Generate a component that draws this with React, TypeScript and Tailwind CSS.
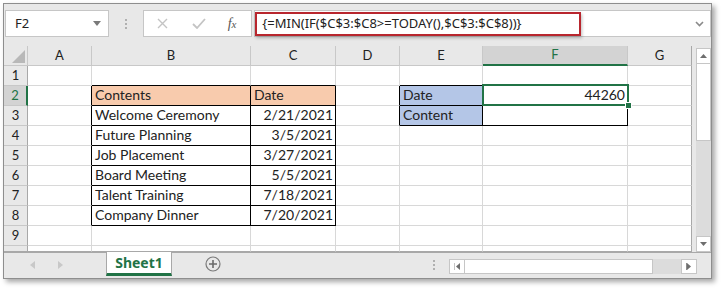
import React from 'react';

type Cell = { text?: string; align?: 'left' | 'right'; fill?: string };

const cols = ['A', 'B', 'C', 'D', 'E', 'F', 'G'];

// sheet content, keyed by "row-col" (col index 0 = A)
const cells: Record<string, Cell> = {
    '2-1': { text: 'Contents', fill: 'bg-[#f8cbad]' },
    '2-2': { text: 'Date', fill: 'bg-[#f8cbad]' },
    '3-1': { text: 'Welcome Ceremony' },
    '3-2': { text: '2/21/2021', align: 'right' },
    '4-1': { text: 'Future Planning' },
    '4-2': { text: '3/5/2021', align: 'right' },
    '5-1': { text: 'Job Placement' },
    '5-2': { text: '3/27/2021', align: 'right' },
    '6-1': { text: 'Board Meeting' },
    '6-2': { text: '5/5/2021', align: 'right' },
    '7-1': { text: 'Talent Training' },
    '7-2': { text: '7/18/2021', align: 'right' },
    '8-1': { text: 'Company Dinner' },
    '8-2': { text: '7/20/2021', align: 'right' },
    '2-4': { text: 'Date', fill: 'bg-[#b4c6e7]' },
    '3-4': { text: 'Content', fill: 'bg-[#b4c6e7]' },
    '2-5': { text: '44260', align: 'right' },
};

// ranges with thin black borders: [r1, c1, r2, c2]
const boxes = [
    [2, 1, 8, 2],
    [2, 4, 3, 5],
];

const inBox = (r: number, c: number) =>
    boxes.some(([r1, c1, r2, c2]) => r >= r1 && r <= r2 && c >= c1 && c <= c2);

const font = { fontFamily: 'Lato, "Noto Sans", sans-serif' };

const App: React.FC = () => {
    const rows = [1, 2, 3, 4, 5, 6, 7, 8, 9, 10];

    return (
        <div className="w-[721px] h-[289px] bg-white pt-[3px] pl-[3px]">
            <div className="w-[709px] h-[276px] border border-[#8e8e8e] bg-[#e8e8e8] shadow-[3px_3px_5px_rgba(0,0,0,0.35)] flex flex-col">
                {/* formula bar */}
                <div className="h-[42px] flex items-start pt-[6px] shrink-0">
                    <div className="ml-[1px] w-[104px] h-[27px] bg-white border border-[#c6c6c6] flex items-center justify-between pl-[9px] pr-[7px]">
                        <span className="text-[13px] text-[#222]" style={{ fontFamily: '"Noto Sans", sans-serif' }}>F2</span>
                        <svg width="8" height="5" viewBox="0 0 8 5"><path d="M0 0h8L4 5z" fill="#7a7a7a" /></svg>
                    </div>
                    <div className="w-[34px] h-[27px] flex flex-col items-center justify-center gap-[2px]">
                        <span className="w-[2px] h-[2px] bg-[#b0b0b0]" />
                        <span className="w-[2px] h-[2px] bg-[#b0b0b0]" />
                        <span className="w-[2px] h-[2px] bg-[#b0b0b0]" />
                    </div>
                    <div className="w-[110px] h-[27px] bg-white border border-[#c6c6c6] flex items-center">
                        <svg className="ml-[13px]" width="11" height="11" viewBox="0 0 11 11"><path d="M1 1l9 9M10 1l-9 9" stroke="#c4c4c4" strokeWidth="1.4" /></svg>
                        <svg className="ml-[24px]" width="14" height="11" viewBox="0 0 14 11"><path d="M1 6l4 4 8-9" stroke="#c4c4c4" strokeWidth="1.8" fill="none" /></svg>
                        <span className="ml-[22px] text-[14px] italic text-[#555]" style={{ fontFamily: '"Liberation Serif", serif' }}>f<span className="text-[11px]">x</span></span>
                    </div>
                    <div className="ml-[2px] w-[458px] h-[27px] bg-white border border-[#c6c6c6] flex items-center pr-[6px]">
                        <div className="w-[326px] h-[24px] border-2 border-[#b8262e] shadow-[1px_2px_3px_rgba(0,0,0,0.25)] flex items-center pl-[5px]">
                            <span className="text-[13px] text-[#222] whitespace-nowrap" style={{ fontFamily: '"Noto Sans", sans-serif' }}>
                                {'{=MIN(IF($C$3:$C8>=TODAY(),$C$3:$C$8))}'}
                            </span>
                        </div>
                        <div className="flex-1" />
                        <svg width="9" height="6" viewBox="0 0 9 6"><path d="M1 1l3.5 3.5L8 1" stroke="#8a8a8a" strokeWidth="1.6" fill="none" /></svg>
                    </div>
                </div>

                {/* grid + vertical scrollbar */}
                <div className="h-[206px] flex shrink-0">
                    <div className="relative w-[688px] bg-white grid grid-cols-[24px_64px_159px_85px_64px_83px_145px_64px] grid-rows-[20px_repeat(9,20px)_6px] text-[#222]">
                        {/* header row */}
                        <div className="bg-[#e8e8e8] border-r border-b border-[#c8c8c8] flex items-end justify-end pr-[2px] pb-[2px]">
                            <svg width="13" height="13" viewBox="0 0 13 13"><path d="M13 0v13H0z" fill="#b8b8b8" /></svg>
                        </div>
                        {cols.map((c) => (
                            <div
                                key={c}
                                className={`flex items-center justify-center text-[13px] border-r ${
                                    c === 'F'
                                        ? 'bg-[#d3d3d3] text-[#217346] border-b-2 border-b-[#217346] border-r-[#c8c8c8]'
                                        : c === 'G'
                                        ? 'bg-[#e8e8e8] border-b border-[#c8c8c8] border-r-[#a8a8a8]'
                                        : 'bg-[#e8e8e8] border-b border-[#c8c8c8]'
                                }`}
                                style={font}
                            >
                                {c}
                            </div>
                        ))}
                        {rows.map((r) => (
                            <React.Fragment key={r}>
                                <div
                                    className={`flex items-center justify-center text-[13px] border-b border-[#c8c8c8] ${
                                        r === 2
                                            ? 'bg-[#d3d3d3] text-[#217346] border-r-2 border-r-[#217346]'
                                            : 'bg-[#e8e8e8] border-r border-r-[#a8a8a8]'
                                    } ${r === 10 ? 'border-b-[#a8a8a8]' : ''}`}
                                    style={font}
                                >
                                    {r < 10 ? r : ''}
                                </div>
                                {cols.map((_, c) => {
                                    const cell = cells[`${r}-${c}`] || {};
                                    const blackR = inBox(r, c) || inBox(r, c + 1);
                                    const blackB = inBox(r, c) || inBox(r + 1, c);
                                    return (
                                        <div
                                            key={c}
                                            className={`border-r border-b overflow-hidden whitespace-nowrap flex items-end pb-[1px] text-[14px] leading-[18px] px-[3px] ${
                                                cell.fill || ''
                                            } ${blackR ? 'border-r-black' : c === 6 ? 'border-r-[#a8a8a8]' : 'border-r-[#d8d8d8]'} ${
                                                blackB ? 'border-b-black' : r === 10 ? 'border-b-[#a8a8a8]' : 'border-b-[#d8d8d8]'
                                            } ${cell.align === 'right' ? 'justify-end pr-[2px]' : ''}`}
                                            style={font}
                                        >
                                            {cell.text}
                                        </div>
                                    );
                                })}
                            </React.Fragment>
                        ))}
                        {/* active cell F2 */}
                        <div className="absolute left-[478px] top-[38px] w-[147px] h-[22px] border-2 border-[#217346] pointer-events-none">
                            <div className="absolute -right-[5px] -bottom-[5px] w-[7px] h-[7px] bg-[#217346] border border-white" />
                        </div>
                    </div>
                    <div className="w-[4px]" />
                    <div className="w-[15px] flex flex-col pt-[2px]">
                        <div className="h-[16px] bg-white border border-[#c6c6c6] flex items-center justify-center">
                            <svg width="7" height="4" viewBox="0 0 7 4"><path d="M0 4h7L3.5 0z" fill="#6e6e6e" /></svg>
                        </div>
                        <div className="h-[77px] bg-white border border-[#c6c6c6] border-t-0" />
                        <div className="flex-1 bg-[#dcdcdc]" />
                        <div className="h-[16px] bg-white border border-[#c6c6c6] flex items-center justify-center">
                            <svg width="7" height="4" viewBox="0 0 7 4"><path d="M0 0h7L3.5 4z" fill="#6e6e6e" /></svg>
                        </div>
                    </div>
                </div>

                {/* sheet tabs */}
                <div className="flex-1 flex items-start border-t border-[#a8a8a8]">
                    <svg className="ml-[26px] mt-[8px]" width="5" height="8" viewBox="0 0 5 8"><path d="M5 0v8L0 4z" fill="#c8c8c8" /></svg>
                    <svg className="ml-[23px] mt-[8px]" width="5" height="8" viewBox="0 0 5 8"><path d="M0 0v8l5-4z" fill="#c8c8c8" /></svg>
                    <div className="-mt-px ml-[43px] w-[66px] h-[24px] bg-white border-x border-[#a8a8a8] border-b-[3px] border-b-[#217346] flex items-center justify-center">
                        <span className="text-[14px] font-bold text-[#217346]" style={{ fontFamily: '"Noto Sans", sans-serif' }}>Sheet1</span>
                    </div>
                    <svg className="ml-[33px] mt-[3px]" width="16" height="16" viewBox="0 0 16 16">
                        <circle cx="8" cy="8" r="7" fill="none" stroke="#7a7a7a" strokeWidth="1.2" />
                        <path d="M8 4v8M4 8h8" stroke="#6a6a6a" strokeWidth="1.6" />
                    </svg>
                    <div className="ml-[212px] mt-[7px] flex flex-col gap-[2px]">
                        <span className="w-[2px] h-[2px] bg-[#b0b0b0]" />
                        <span className="w-[2px] h-[2px] bg-[#b0b0b0]" />
                        <span className="w-[2px] h-[2px] bg-[#b0b0b0]" />
                    </div>
                    <div className="ml-[14px] mt-[6px] w-[248px] h-[15px] flex">
                        <div className="w-[16px] bg-white border border-[#c6c6c6] flex items-center justify-center">
                            <svg width="6" height="7" viewBox="0 0 6 7"><path d="M0 0v7" stroke="#8a8a8a" /><path d="M6 0v7L2 3.5z" fill="#6e6e6e" /></svg>
                        </div>
                        <div className="w-[188px] bg-white border border-[#c6c6c6] border-l-0" />
                        <div className="flex-1 bg-[#dcdcdc]" />
                        <div className="w-[16px] bg-white border border-[#c6c6c6] flex items-center justify-center">
                            <svg width="6" height="7" viewBox="0 0 6 7"><path d="M0.5 0v7" stroke="#8a8a8a" /><path d="M1 0v7l4-3.5z" fill="#6e6e6e" /></svg>
                        </div>
                    </div>
                </div>
            </div>
        </div>
    );
};

export default App;
